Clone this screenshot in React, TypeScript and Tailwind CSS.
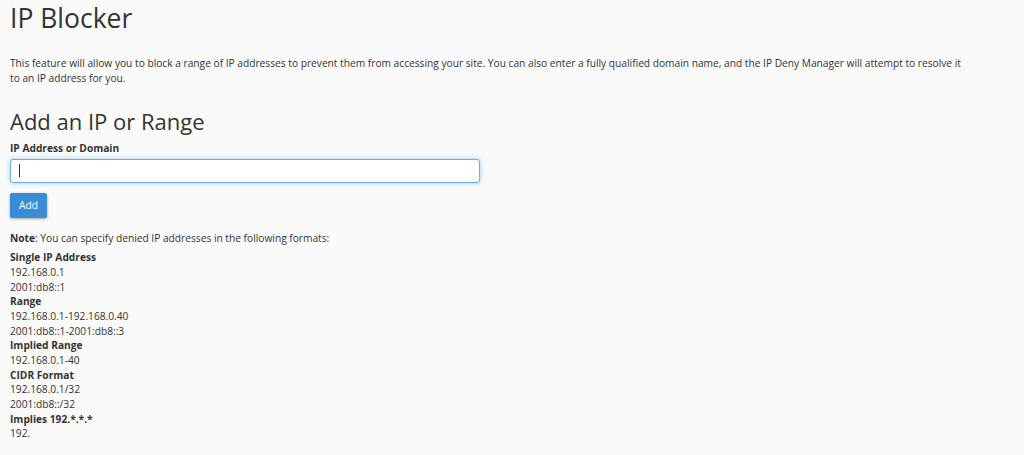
export default function App() {
  return (
    <div
      className="min-h-[455px] w-full bg-[#fafafa] px-[10px] text-[10.2px] leading-[14.6px] text-[#333]"
      style={{ fontFamily: '"Open Sans", sans-serif' }}
    >
      <h1 className="pt-[4px] text-[26.5px] font-normal leading-[29px] text-[#333]">IP Blocker</h1>
      <p className="mt-[23px] max-w-[955px]">
        This feature will allow you to block a range of IP addresses to prevent them from accessing your site. You can
        also enter a fully qualified domain name, and the IP Deny Manager will attempt to resolve it to an IP address for
        you.
      </p>
      <h2 className="mt-[24px] text-[22px] font-normal leading-[24px]">Add an IP or Range</h2>
      <label className="mt-[8px] block font-bold">IP Address or Domain</label>
      <div className="mt-[3px] flex h-[24px] w-[470px] items-center rounded-[3px] border border-[#66afe9] bg-white px-[8px] shadow-[0_0_5px_rgba(102,175,233,0.6)]">
        <span className="h-[13px] w-px bg-[#333]" />
      </div>
      <button className="mt-[10px] block h-[25px] w-[37px] rounded-[2px] bg-[#3a8cd6] text-[10.2px] text-white shadow-[0_1px_3px_rgba(0,0,0,0.35)]">
        Add
      </button>
      <p className="mt-[13px]">
        <span className="font-bold">Note</span>: You can specify denied IP addresses in the following formats:
      </p>
      <dl className="mt-[5px] leading-[14.67px]">
        <dt className="font-bold">Single IP Address</dt>
        <dd>192.168.0.1</dd>
        <dd>2001:db8::1</dd>
        <dt className="font-bold">Range</dt>
        <dd>192.168.0.1-192.168.0.40</dd>
        <dd>2001:db8::1-2001:db8::3</dd>
        <dt className="font-bold">Implied Range</dt>
        <dd>192.168.0.1-40</dd>
        <dt className="font-bold">CIDR Format</dt>
        <dd>192.168.0.1/32</dd>
        <dd>2001:db8::/32</dd>
        <dt className="font-bold">Implies 192.*.*.*</dt>
        <dd>192.</dd>
      </dl>
    </div>
  );
}
